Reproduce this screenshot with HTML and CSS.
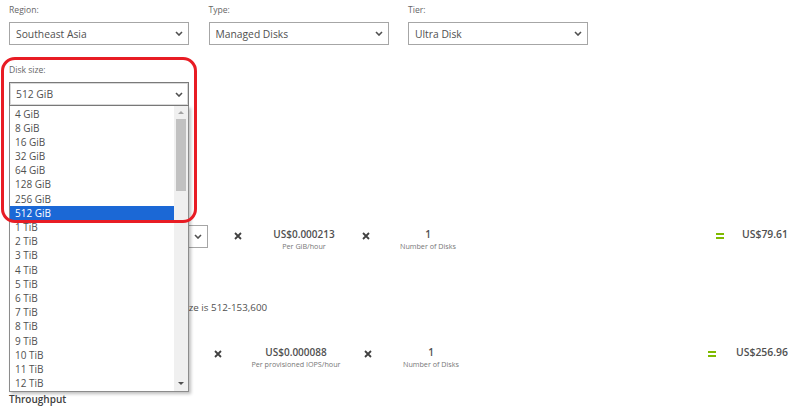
FILE: index.html
```html
<!DOCTYPE html>
<html lang="en">
<head>
    <meta charset="UTF-8">
    <meta name="viewport" content="width=device-width, initial-scale=1.0">
    <title>Managed Disks - Pricing</title>
    <link rel="stylesheet" href="styles.css">
</head>
<body>
    <div class="page">
        <div class="filters">
            <div class="field">
                <div class="field-label">Region:</div>
                <div class="select">
                    <span>Southeast Asia</span>
                    <svg class="chevron" width="8" height="5" viewBox="0 0 8 5"><path d="M1 1 L4 4 L7 1" /></svg>
                </div>
            </div>
            <div class="field">
                <div class="field-label">Type:</div>
                <div class="select">
                    <span>Managed Disks</span>
                    <svg class="chevron" width="8" height="5" viewBox="0 0 8 5"><path d="M1 1 L4 4 L7 1" /></svg>
                </div>
            </div>
            <div class="field">
                <div class="field-label">Tier:</div>
                <div class="select">
                    <span>Ultra Disk</span>
                    <svg class="chevron" width="8" height="5" viewBox="0 0 8 5"><path d="M1 1 L4 4 L7 1" /></svg>
                </div>
            </div>
        </div>

        <div class="field disk-field">
            <div class="field-label">Disk size:</div>
            <div class="select select-open">
                <span>512 GiB</span>
                <svg class="chevron" width="8" height="5" viewBox="0 0 8 5"><path d="M1 1 L4 4 L7 1" /></svg>
            </div>

            <div class="dropdown">
                <ul class="options">
                    <li>4 GiB</li>
                    <li>8 GiB</li>
                    <li>16 GiB</li>
                    <li>32 GiB</li>
                    <li>64 GiB</li>
                    <li>128 GiB</li>
                    <li>256 GiB</li>
                    <li class="selected">512 GiB</li>
                    <li>1 TiB</li>
                    <li>2 TiB</li>
                    <li>3 TiB</li>
                    <li>4 TiB</li>
                    <li>5 TiB</li>
                    <li>6 TiB</li>
                    <li>7 TiB</li>
                    <li>8 TiB</li>
                    <li>9 TiB</li>
                    <li>10 TiB</li>
                    <li>11 TiB</li>
                    <li>12 TiB</li>
                </ul>
                <div class="scrollbar">
                    <span class="arrow arrow-up"></span>
                    <span class="thumb"></span>
                    <span class="arrow arrow-down"></span>
                </div>
            </div>

            <div class="callout"></div>
        </div>

        <div class="calc-row row-capacity">
            <div class="select">
                <span></span>
                <svg class="chevron" width="8" height="5" viewBox="0 0 8 5"><path d="M1 1 L4 4 L7 1" /></svg>
            </div>
            <div class="op"><svg width="8" height="8" viewBox="0 0 8 8"><path d="M1 1 L7 7 M7 1 L1 7" /></svg></div>
            <div class="figure">
                <div class="amount">US$0.000213</div>
                <div class="unit">Per GiB/hour</div>
            </div>
            <div class="op"><svg width="8" height="8" viewBox="0 0 8 8"><path d="M1 1 L7 7 M7 1 L1 7" /></svg></div>
            <div class="figure">
                <div class="amount">1</div>
                <div class="unit">Number of Disks</div>
            </div>
            <div></div>
            <div class="equals"><span></span><span></span></div>
            <div class="total">US$79.61</div>
        </div>

        <p class="hint">IOPS: The valid range for this disk size is 512-153,600</p>

        <div class="calc-row row-iops">
            <div class="input"></div>
            <div class="op"><svg width="8" height="8" viewBox="0 0 8 8"><path d="M1 1 L7 7 M7 1 L1 7" /></svg></div>
            <div class="figure">
                <div class="amount">US$0.000088</div>
                <div class="unit">Per provisioned IOPS/hour</div>
            </div>
            <div class="op"><svg width="8" height="8" viewBox="0 0 8 8"><path d="M1 1 L7 7 M7 1 L1 7" /></svg></div>
            <div class="figure">
                <div class="amount">1</div>
                <div class="unit">Number of Disks</div>
            </div>
            <div></div>
            <div class="equals"><span></span><span></span></div>
            <div class="total">US$256.96</div>
        </div>

        <h4 class="section-title">Throughput</h4>
    </div>
</body>
</html>
```

FILE: styles.css
```css
body {
    margin: 0;
    background: #fff;
    font-family: 'Open Sans', 'Noto Sans', sans-serif;
    color: #505050;
    overflow: hidden;
}
.page {
    padding: 5px 12px 0 9px;
}
.filters {
    display: flex;
    gap: 19.5px;
}
.field {
    width: 180px;
}
.field-label {
    font-size: 8.6px;
    line-height: 11px;
    color: #666;
    margin-bottom: 6px;
}
.select,
.input {
    box-sizing: border-box;
    height: 23px;
    border: 1px solid #a6a6a6;
    background: #fff;
    display: flex;
    align-items: center;
    justify-content: space-between;
    padding: 0 5px 0 6px;
    font-size: 10.3px;
    color: #505050;
}
.chevron path {
    fill: none;
    stroke: #505050;
    stroke-width: 1.6;
}
.disk-field {
    position: relative;
    margin-top: 20px;
}
.select-open {
    height: 24px;
    border-color: #7a7a7a;
    box-shadow: inset 0 0 0 1px #d9d9d9;
}

/* open list of the disk size select */
.dropdown {
    position: absolute;
    top: 100%;
    left: 0;
    width: 180px;
    height: 286px;
    box-sizing: border-box;
    border: 1px solid #8c8c8c;
    border-top: none;
    background: #fff;
    box-shadow: 2px 2px 3px rgba(0, 0, 0, 0.25);
    display: flex;
    z-index: 10;
}
.options {
    list-style: none;
    margin: 0;
    padding: 0.5px 0 0;
    flex: 1;
}
.options li {
    height: 14.2px;
    line-height: 14.2px;
    padding-left: 5px;
    font-size: 10px;
    color: #505050;
}
.options li.selected {
    background: #1b68d6;
    color: #fff;
}
.scrollbar {
    width: 14px;
    background: #f0f0f0;
    display: flex;
    flex-direction: column;
    align-items: center;
}
.arrow {
    width: 0;
    height: 0;
    border-left: 3px solid transparent;
    border-right: 3px solid transparent;
}
.arrow-up {
    margin-top: 5px;
    border-bottom: 3px solid #a3a3a3;
}
.arrow-down {
    margin-top: auto;
    margin-bottom: 6px;
    border-top: 3px solid #505050;
}
.thumb {
    width: 10px;
    height: 72px;
    margin-top: 5px;
    background: #c1c1c1;
}
.callout {
    position: absolute;
    left: -8px;
    top: -8px;
    width: 196px;
    height: 166px;
    box-sizing: border-box;
    border: 3px solid #e81c24;
    border-radius: 14px;
    z-index: 20;
}

/* price rows */
.calc-row {
    display: grid;
    align-items: start;
}
.row-capacity {
    margin-top: 119px;
    grid-template-columns: 199px 60px 72px 52px 72px 1fr 26px 55px;
}
.row-iops {
    margin-top: 28px;
    grid-template-columns: 179px 60px 96px 48px 78px 1fr 26px 55px;
}
.row-iops .equals {
    margin-left: -16px;
}
.op {
    height: 22px;
    display: flex;
    align-items: center;
    justify-content: center;
}
.op path {
    fill: none;
    stroke: #404040;
    stroke-width: 1.8;
}
.figure {
    text-align: center;
    padding-top: 3px;
}
.amount {
    font-size: 10px;
    line-height: 13px;
    font-weight: 600;
    color: #505050;
}
.unit {
    font-size: 7.2px;
    line-height: 9px;
    margin-top: 1px;
    color: #777;
    white-space: nowrap;
}
.equals {
    height: 22px;
    display: flex;
    flex-direction: column;
    justify-content: center;
    align-items: center;
    gap: 2px;
}
.equals span {
    width: 8px;
    height: 2px;
    background: #7fba00;
}
.total {
    text-align: right;
    padding-top: 3px;
    font-size: 10.4px;
    line-height: 13px;
    font-weight: 600;
    color: #505050;
}
.hint {
    margin: 50px 0 0 18px;
    font-size: 9.8px;
    line-height: 14px;
    white-space: nowrap;
}
.section-title {
    margin: 24px 0 0;
    font-size: 10px;
    line-height: 13px;
    font-weight: 600;
    color: #404040;
}
```
